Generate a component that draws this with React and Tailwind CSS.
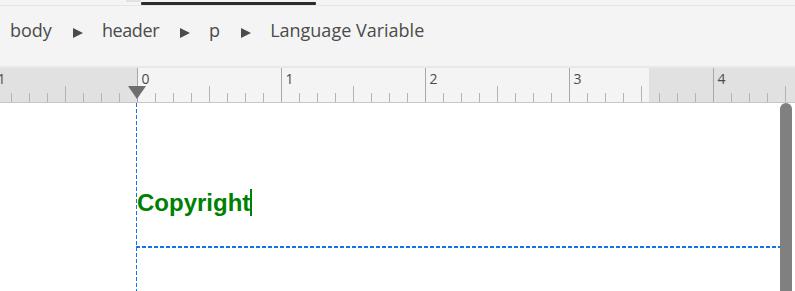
import React from 'react';

const crumbs = ['body', 'header', 'p', 'Language Variable'];

const Arrow = () => (
  <svg width="10" height="10" viewBox="0 0 10 10" className="ml-[2px] mt-[6px] shrink-0">
    <polygon points="0,0 10,5 0,10" fill="#4b4b4b" />
  </svg>
);

const Ruler = () => {
  const ticks = [];
  const labels = [];
  for (let i = -1; i <= 4; i++) {
    const x0 = 137.5 + i * 144;
    ticks.push(<line key={`m${i}`} x1={x0} y1={0} x2={x0} y2={34} stroke="#a8a8a8" strokeWidth="1" />);
    labels.push(
      <text key={`t${i}`} x={x0 + 4} y={16} fontSize="14" fill="#4b4b4b" fontFamily="'Open Sans', sans-serif">
        {Math.abs(i)}
      </text>
    );
    for (let k = 1; k < 8; k++) {
      const x = x0 + k * 18;
      ticks.push(
        <line key={`s${i}-${k}`} x1={x} y1={k === 4 ? 18 : 25} x2={x} y2={34} stroke="#b4b4b4" strokeWidth="1" />
      );
    }
  }
  return (
    <svg width="795" height="35" className="block">
      <rect x="0" y="0" width="795" height="35" fill="#f4f4f4" />
      <rect x="0" y="0" width="137" height="34" fill="#e1e1e1" />
      <rect x="649" y="0" width="146" height="34" fill="#e1e1e1" />
      {ticks}
      {labels}
      <line x1="0" y1="34.5" x2="795" y2="34.5" stroke="#c6c6c6" strokeWidth="1" />
      <polygon points="128,18 146,18 137,31" fill="#6e6e6e" />
    </svg>
  );
};

export default function App() {
  return (
    <div className="w-[795px] h-[291px] overflow-hidden bg-white flex flex-col font-['Open_Sans',sans-serif]">
      {/* tab strip */}
      <div className="h-[5px] bg-[#f4f4f4] flex shrink-0">
        <div className="ml-[126px] w-[15px] h-[2px] bg-[#e2e2e2]" />
        <div className="w-[175px] h-[3px] mt-[2px] bg-[#2c2c2c] rounded-[1px]" />
      </div>
      <div className="h-px bg-[#e6e6e6] shrink-0" />

      {/* breadcrumb */}
      <div className="h-[60px] bg-[#f4f4f4] flex items-center gap-[19px] pl-[10px] pb-[12px] text-[18px] text-[#4b4b4b] shrink-0">
        {crumbs.map((c, i) => (
          <React.Fragment key={c}>
            <span className={c === 'header' ? 'tracking-[-0.4px]' : ''}>{c}</span>
            {i < crumbs.length - 1 && <Arrow />}
          </React.Fragment>
        ))}
      </div>
      <div className="h-[2px] bg-[#e8e8e8] shrink-0" />

      <Ruler />

      {/* document */}
      <div className="relative flex-1 flex">
        <div className="ml-[136px] w-[644px] bg-[repeating-linear-gradient(to_bottom,#1473e6_0_4px,transparent_4px_6px)] bg-no-repeat bg-[length:1px_100%]">
          <div className="pl-px pt-[86px] pb-[31px] bg-[repeating-linear-gradient(to_right,#1473e6_0_4px,transparent_4px_6px)] bg-no-repeat bg-[length:100%_2px] bg-bottom">
            <p className="h-[28px] leading-[28px] text-[24px] font-bold text-[#008000] font-['Liberation_Sans',Arial,sans-serif] flex items-start">
              Copyright
              <span className="inline-block w-[2px] h-[27px] bg-[#008000]" />
            </p>
          </div>
        </div>
        <div className="ml-auto mr-[3px] w-[12px] bg-[#808080] rounded-t-full" />
      </div>
    </div>
  );
}
